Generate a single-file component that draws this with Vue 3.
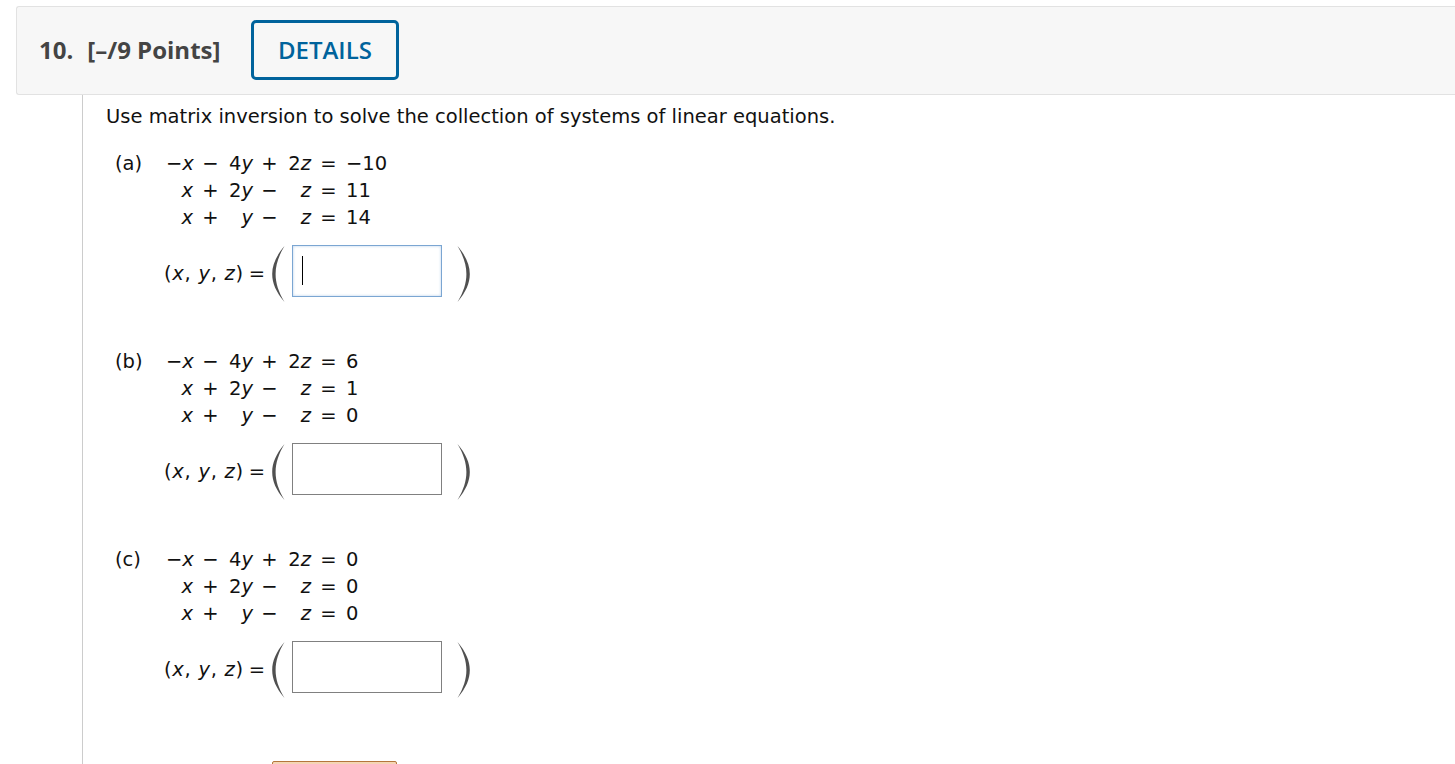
<script setup>
const parts = [
  { label: '(a)', r: ['−10', '11', '14'], focus: true },
  { label: '(b)', r: ['6', '1', '0'] },
  { label: '(c)', r: ['0', '0', '0'] },
]
</script>

<template>
  <div class="page">
    <header class="head">
      <span class="num">10.</span>
      <span class="pts">[–/9 Points]</span>
      <button class="details">DETAILS</button>
    </header>
    <main class="body">
      <p class="intro">Use matrix inversion to solve the collection of systems of linear equations.</p>
      <section v-for="p in parts" :key="p.label" class="part">
        <div class="label">{{ p.label }}</div>
        <div class="work">
          <div class="sys">
            <span class="c1">−<i>x</i></span><span class="op">−</span><span class="c2">4<i>y</i></span><span class="op">+</span><span class="c2">2<i>z</i></span><span class="op">=</span><span class="val">{{ p.r[0] }}</span>
            <span class="c1"><i>x</i></span><span class="op">+</span><span class="c2">2<i>y</i></span><span class="op">−</span><span class="c2"><i>z</i></span><span class="op">=</span><span class="val">{{ p.r[1] }}</span>
            <span class="c1"><i>x</i></span><span class="op">+</span><span class="c2"><i>y</i></span><span class="op">−</span><span class="c2"><i>z</i></span><span class="op">=</span><span class="val">{{ p.r[2] }}</span>
          </div>
          <div class="answer">
            <span class="tuple">(<i>x</i>, <i>y</i>, <i>z</i>)</span>
            <span class="eq">=</span>
            <svg class="paren left" width="13" height="58" viewBox="0 0 13 58"><path d="M12.5 1C4 11 .2 20 .2 29s3.800 18 12.300 28C6.500 47 3.600 38 3.600 29S6.500 11 12.500 1z" fill="#505050"/></svg>
            <div class="field" :class="{ focus: p.focus }"><span v-if="p.focus" class="caret"></span></div>
            <svg class="paren right" width="13" height="58" viewBox="0 0 13 58"><path d="M.5 1C9 11 12.800 20 12.800 29s-3.800 18-12.300 28C6.500 47 9.400 38 9.400 29S6.500 11 .5 1z" fill="#505050"/></svg>
          </div>
        </div>
      </section>
      <div class="submit"></div>
    </main>
  </div>
</template>

<style scoped>
.page { height: 764px; overflow: hidden; padding-top: 6px; box-sizing: border-box; font-family: "DejaVu Sans", Verdana, sans-serif; color: #111; background: #fff; }
.head { margin-left: 16px; height: 89px; box-sizing: border-box; display: flex; align-items: center; padding: 0 0 2px 22px; background: #f7f7f7; border: 1px solid #e2e2e2; border-right: 0; border-radius: 3px 0 0 3px; font-family: "Open Sans", sans-serif; color: #444; font-weight: 700; font-size: 24px; }
.num { margin-right: 14px; }
.details { margin-left: 31px; width: 148px; height: 60px; box-sizing: border-box; border: 3px solid #00639c; border-radius: 5px; background: #f7f7f7; color: #00639c; font: 600 24px "Open Sans", sans-serif; padding: 0 1px 0 0; }
.body { margin-left: 82px; border-left: 1px solid #ccc; padding-left: 23px; height: 669px; font-size: 19.5px; }
.intro { margin: 0; padding-top: 8px; line-height: 27px; height: 27px; }
.part { display: flex; height: 198px; padding-top: 20px; box-sizing: border-box; }
.label { width: 60px; line-height: 27px; padding-left: 9px; box-sizing: border-box; }
.sys { display: grid; grid-template-columns: 27px 35px 25px 33px 25px 35px auto; grid-auto-rows: 27px; line-height: 27px; justify-content: start; }
.sys span { white-space: nowrap; }
.c1, .c2 { text-align: right; }
.op { text-align: center; }
.answer { display: flex; align-items: center; margin-top: 14px; height: 58px; }
.tuple { margin-left: -2px; white-space: nowrap; letter-spacing: 0.7px; position: relative; top: -1px; }
.eq { margin-left: 5px; position: relative; top: -1px; }
.paren { flex: none; }
.left { margin-left: 7px; }
.right { margin-left: 15px; }
.field { width: 150px; height: 52px; box-sizing: border-box; border: 1px solid #808080; background: #fff; margin-left: 7px; padding: 0 9px 1px; display: flex; align-items: center; align-self: flex-start; }
.field.focus { border-color: #7ba6d2; box-shadow: inset 0 0 3px #b8d0ea; }
.caret { width: 1px; height: 29px; background: #000; }
.submit { margin-left: 166px; margin-top: 37px; width: 125px; height: 10px; box-sizing: border-box; border: 1px solid #b5763c; border-radius: 2px; background: #f5d5b5; }
</style>
